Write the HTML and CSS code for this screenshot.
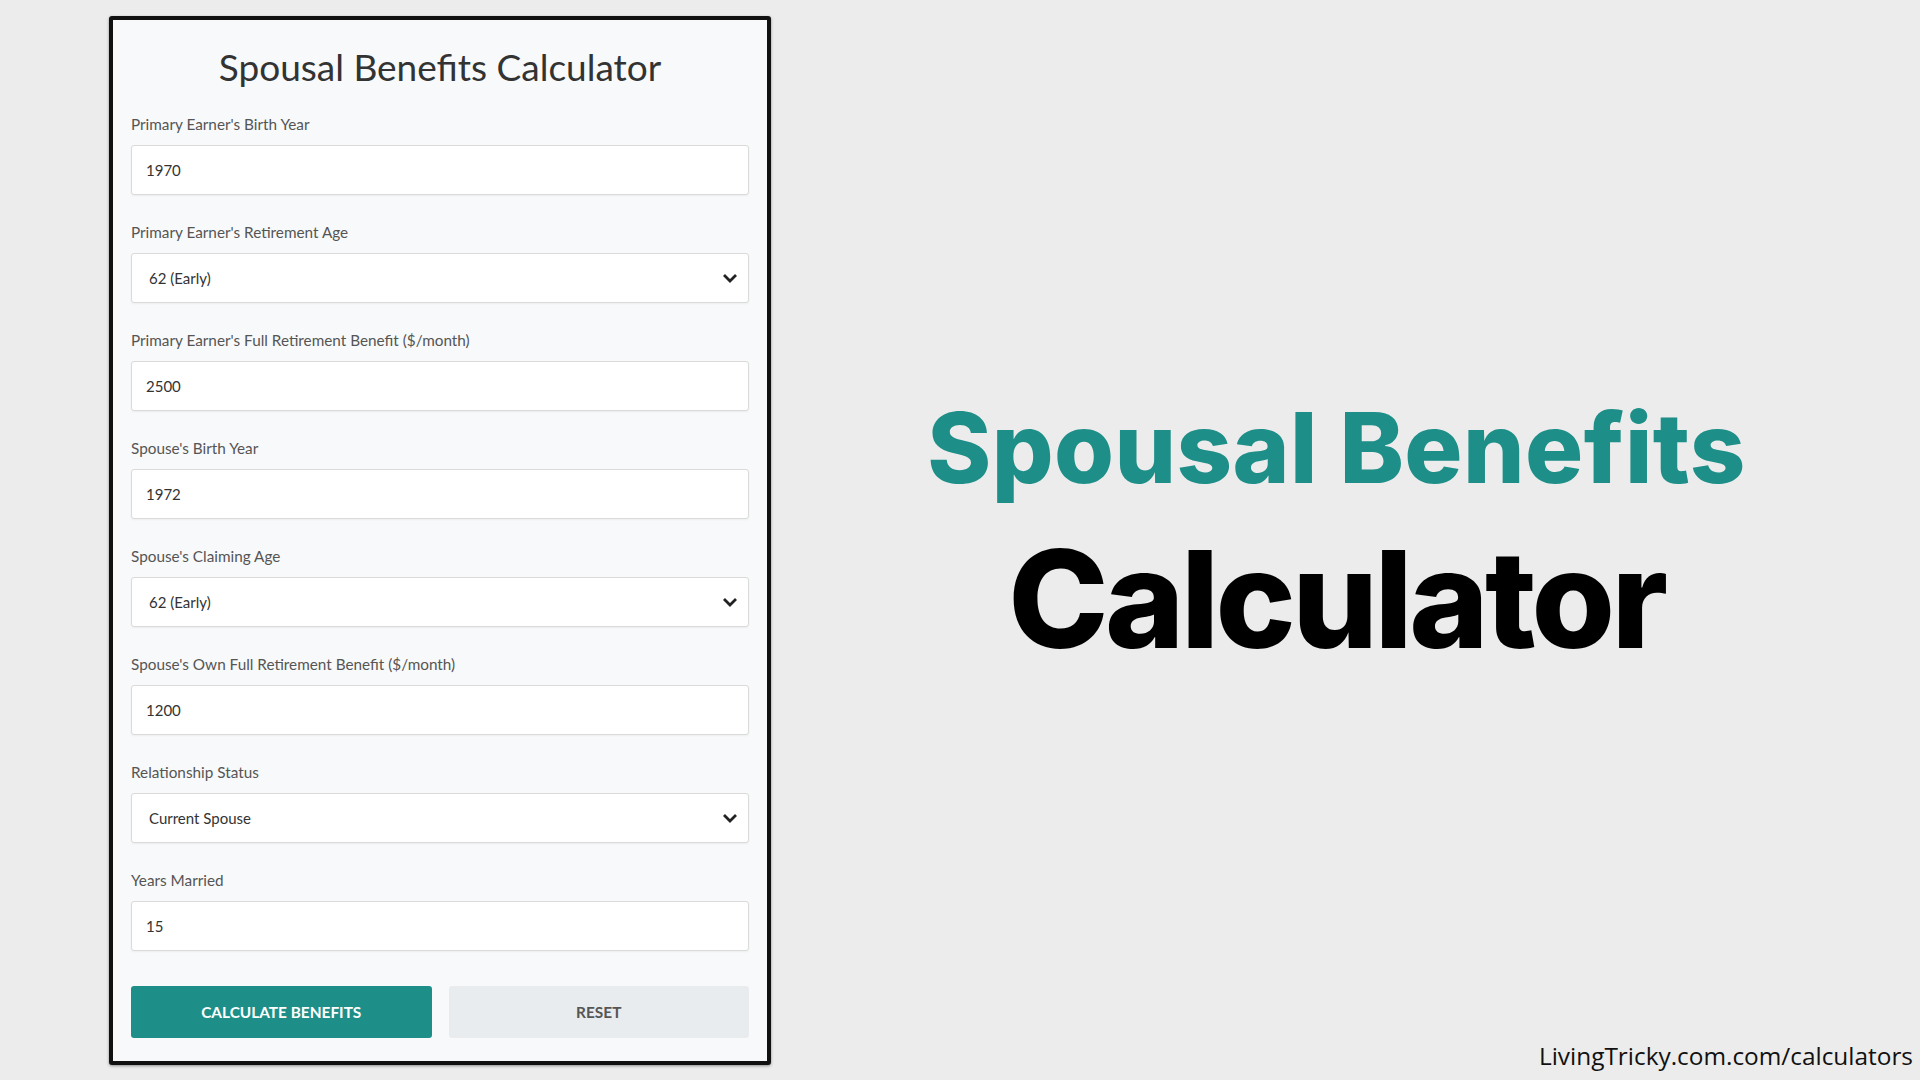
FILE: index.html
```html
<!DOCTYPE html>
<html>
<head>
    <title>Spousal Benefits Calculator</title>
    <link rel="stylesheet" href="styles.css">
</head>
<body>
    <div class="calc-card">
        <h2 class="calc-title">Spousal Benefits Calculator</h2>

        <div class="campo">
            <label>Primary Earner's Birth Year</label>
            <div class="caja">1970</div>
        </div>

        <div class="campo">
            <label>Primary Earner's Retirement Age</label>
            <div class="caja caja-select">
                <span>62 (Early)</span>
                <svg class="flecha" width="16" height="12" viewBox="0 0 16 12"><path d="M2 3 L8 9 L14 3" fill="none" stroke="#222" stroke-width="2.8"/></svg>
            </div>
        </div>

        <div class="campo">
            <label>Primary Earner's Full Retirement Benefit ($/month)</label>
            <div class="caja">2500</div>
        </div>

        <div class="campo">
            <label>Spouse's Birth Year</label>
            <div class="caja">1972</div>
        </div>

        <div class="campo">
            <label>Spouse's Claiming Age</label>
            <div class="caja caja-select">
                <span>62 (Early)</span>
                <svg class="flecha" width="16" height="12" viewBox="0 0 16 12"><path d="M2 3 L8 9 L14 3" fill="none" stroke="#222" stroke-width="2.8"/></svg>
            </div>
        </div>

        <div class="campo">
            <label>Spouse's Own Full Retirement Benefit ($/month)</label>
            <div class="caja">1200</div>
        </div>

        <div class="campo">
            <label>Relationship Status</label>
            <div class="caja caja-select">
                <span>Current Spouse</span>
                <svg class="flecha" width="16" height="12" viewBox="0 0 16 12"><path d="M2 3 L8 9 L14 3" fill="none" stroke="#222" stroke-width="2.8"/></svg>
            </div>
        </div>

        <div class="campo">
            <label>Years Married</label>
            <div class="caja">15</div>
        </div>

        <div class="botones">
            <button class="boton boton-calc">CALCULATE BENEFITS</button>
            <button class="boton boton-reset">RESET</button>
        </div>
    </div>

    <div class="hero">
        <div class="hero-texto">
            <div class="hero-linea1">Spousal Benefits</div>
            <div class="hero-linea2">Calculator</div>
        </div>
        <div class="pie">LivingTricky.com.com/calculators</div>
    </div>
</body>
</html>
```

FILE: styles.css
```css
body {
    margin: 0;
    height: 1080px;
    background-color: #ececec;
    display: flex;
    overflow: hidden;
    font-family: Lato, 'Open Sans', sans-serif;
}

.calc-card {
    margin: 16px 0 0 109px;
    width: 662px;
    height: 1049px;
    box-sizing: border-box;
    border: 4px solid #111;
    border-radius: 3px;
    background-color: #f8f9fa;
    padding: 21px 18px 0 18px;
    box-shadow: 0 1px 3px rgba(0,0,0,0.4);
}

.calc-title {
    margin: 0 0 21px 0;
    text-align: center;
    font-size: 37px;
    font-weight: 400;
    color: #333;
    line-height: 52px;
}

.campo {
    margin-bottom: 27px;
}

.campo label {
    display: block;
    font-size: 15.3px;
    color: #555;
    line-height: 20px;
    margin-bottom: 11px;
}

.caja {
    height: 50px;
    box-sizing: border-box;
    background: #fff;
    border: 1px solid #dadada;
    border-radius: 3px;
    padding: 0 14px;
    display: flex;
    align-items: center;
    font-size: 15px;
    color: #333;
    box-shadow: 0 1px 2px rgba(0,0,0,0.05);
}

.caja-select {
    justify-content: space-between;
    padding-left: 17px;
}

.flecha {
    margin-right: -4px;
}

.botones {
    display: flex;
    gap: 17px;
    margin-top: 35px;
}

.boton {
    flex: 1;
    height: 52px;
    border: none;
    border-radius: 3px;
    font-family: Lato, 'Open Sans', sans-serif;
    font-size: 15.4px;
    font-weight: 700;
}

.boton-calc {
    background-color: #1e8f88;
    color: #fff;
}

.boton-reset {
    background-color: #e9ecef;
    color: #555;
}

.hero {
    flex: 1;
    display: flex;
    flex-direction: column;
}

.hero-texto {
    flex: 1;
    display: flex;
    flex-direction: column;
    align-items: center;
    justify-content: center;
    padding: 33px 18px 0 0;
}

.hero-linea1 {
    font-family: Inter, Lato, sans-serif;
    font-size: 97px;
    font-weight: 800;
    color: #1e8f88;
    line-height: 120px;
    letter-spacing: 0.4px;
    margin-bottom: 6px;
}

.hero-linea2 {
    font-family: Inter, Lato, sans-serif;
    font-size: 135px;
    font-weight: 800;
    color: #000;
    line-height: 170px;
    letter-spacing: -3.6px;
}

.pie {
    text-align: right;
    font-family: 'Open Sans', sans-serif;
    font-size: 24.4px;
    color: #111;
    padding: 0 7px 8px 0;
}
```
